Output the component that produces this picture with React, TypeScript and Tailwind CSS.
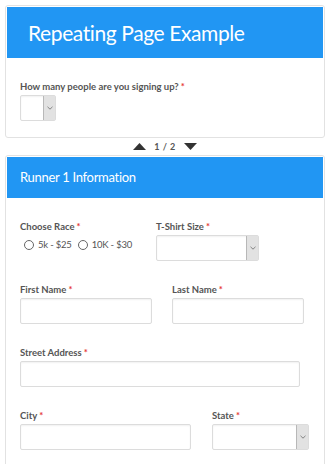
const Req = () => <span className="text-[#e53935] ml-[2px]">*</span>;

const Label = ({ text }: { text: string }) => (
  <div className="text-[9.5px] leading-[14px] font-bold text-[#555] mb-[1px]">
    {text}
    <Req />
  </div>
);

const Input = ({ w }: { w: string }) => (
  <div className={`${w} h-[26px] border border-[#dcdcdc] rounded-[2px] shadow-[inset_0_1px_2px_rgba(0,0,0,0.06)] bg-white`} />
);

const Select = ({ w }: { w: string }) => (
  <div className={`${w} h-[26px] border border-[#dcdcdc] rounded-[2px] bg-white flex justify-end shadow-[inset_0_1px_2px_rgba(0,0,0,0.06)]`}>
    <div className="w-[12px] h-full bg-[#e2e2e2] border-l border-[#b8b8b8] flex items-center justify-center">
      <svg width="6" height="4" viewBox="0 0 6 4">
        <path d="M0.5 0.8 L3 3.2 L5.5 0.8" stroke="#777" strokeWidth="0.9" fill="none" />
      </svg>
    </div>
  </div>
);

const Radio = ({ text }: { text: string }) => (
  <label className="flex items-center gap-[4px] text-[9.5px] tracking-[-0.2px] text-[#555]">
    <span className="w-[10px] h-[10px] rounded-full border border-[#666] bg-white" />
    {text}
  </label>
);

export default function App() {
  return (
    <div className="bg-white min-h-[464px] h-[464px] overflow-hidden px-[5px] pt-[5px] font-['Lato','Noto_Sans',sans-serif]">
      <div className="border border-[#e2e2e2] rounded-[3px] p-px">
        <div className="bg-[#2196f3] h-[51px] flex items-center pl-[21px] text-white text-[21px] tracking-[-0.4px]">
          Repeating Page Example
        </div>
        <div className="pt-[22px] pb-[15px] px-[13px]">
          <Label text="How many people are you signing up?" />
          <Select w="w-[36px]" />
        </div>
      </div>

      <div className="h-[17px] flex items-center justify-center gap-[8px] text-[#444]">
        <svg width="13" height="7" viewBox="0 0 13 7">
          <path d="M0 7 L6.5 0 L13 7 Z" fill="#333" />
        </svg>
        <span className="text-[9px] font-bold text-[#555] tracking-[0.5px]">1 / 2</span>
        <svg width="13" height="7" viewBox="0 0 13 7">
          <path d="M0 0 L13 0 L6.5 7 Z" fill="#333" />
        </svg>
      </div>

      <div className="border border-[#e2e2e2] rounded-[3px] p-px min-h-[320px]">
        <div className="bg-[#2196f3] h-[41px] flex items-center pl-[13px] text-white text-[13px] tracking-[-0.3px]">
          Runner 1 Information
        </div>
        <div className="pt-[22px] px-[13px]">
          <div className="flex">
            <div className="w-[136px]">
              <Label text="Choose Race" />
              <div className="flex gap-[6px] pl-[4px] pt-[3px]">
                <Radio text="5k - $25" />
                <Radio text="10K - $30" />
              </div>
            </div>
            <div>
              <Label text="T-Shirt Size" />
              <Select w="w-[103px]" />
            </div>
          </div>

          <div className="flex gap-[20px] mt-[22px]">
            <div>
              <Label text="First Name" />
              <Input w="w-[132px]" />
            </div>
            <div>
              <Label text="Last Name" />
              <Input w="w-[132px]" />
            </div>
          </div>

          <div className="mt-[22px]">
            <Label text="Street Address" />
            <Input w="w-[280px]" />
          </div>

          <div className="flex gap-[21px] mt-[22px]">
            <div>
              <Label text="City" />
              <Input w="w-[171px]" />
            </div>
            <div>
              <Label text="State" />
              <Select w="w-[97px]" />
            </div>
          </div>
        </div>
      </div>
    </div>
  );
}
